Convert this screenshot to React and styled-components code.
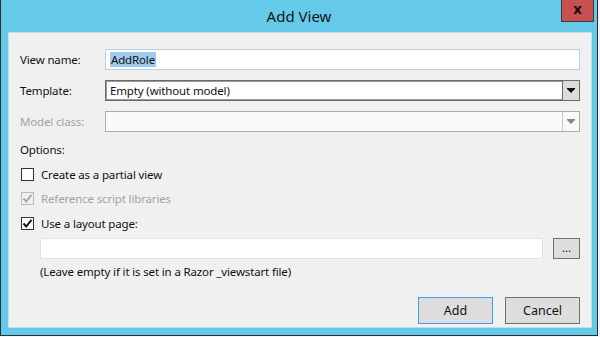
import React from 'react';
import styled, {createGlobalStyle} from 'styled-components';

const GlobalStyle = createGlobalStyle`
    html, body {
        margin: 0;
        padding: 0;
        background: #f4f4f4;
    }
    body {
        font-family: "Noto Sans", "Open Sans", sans-serif;
        font-size: 11.5px;
        letter-spacing: -0.15px;
        color: #111;
    }
`;

const App = () => {
    return (
        <>
            <GlobalStyle/>
            <Window>
                <TitleBar>
                    <span/>
                    <Title>Add View</Title>
                    <CloseCell>
                        <CloseButton>x</CloseButton>
                    </CloseCell>
                </TitleBar>

                <Client>
                    <FormGrid>
                        <Label>View name:</Label>
                        <TextBox>
                            <Selected>AddRole</Selected>
                        </TextBox>

                        <Label>Template:</Label>
                        <ComboBox>
                            <ComboText>Empty (without model)</ComboText>
                            <DropButton><Arrow/></DropButton>
                        </ComboBox>

                        <Label disabled>Model class:</Label>
                        <ComboBox disabled>
                            <ComboText/>
                            <DropButton disabled><Arrow disabled/></DropButton>
                        </ComboBox>
                    </FormGrid>

                    <SectionLabel>Options:</SectionLabel>

                    <CheckList>
                        <CheckRow>
                            <CheckBox/>
                            <span>Create as a partial view</span>
                        </CheckRow>
                        <CheckRow disabled>
                            <CheckBox disabled><CheckMark disabled/></CheckBox>
                            <span>Reference script libraries</span>
                        </CheckRow>
                        <CheckRow>
                            <CheckBox><CheckMark/></CheckBox>
                            <span>Use a layout page:</span>
                        </CheckRow>
                    </CheckList>

                    <LayoutRow>
                        <LayoutInput/>
                        <BrowseButton>...</BrowseButton>
                    </LayoutRow>
                    <Hint>(Leave empty if it is set in a Razor _viewstart file)</Hint>

                    <Footer>
                        <DialogButton primary>Add</DialogButton>
                        <DialogButton>Cancel</DialogButton>
                    </Footer>
                </Client>
            </Window>
        </>
    );
};

const CheckMark = ({disabled}) => (
    <svg width="11" height="11" viewBox="0 0 11 11">
        <path d="M1.5 5.5 L4.2 8.5 L9.5 1.8" fill="none"
              stroke={disabled ? '#a8a8a8' : '#111'} strokeWidth="1.9"/>
    </svg>
);

// window frame
const Window = styled.div`
    width: 596px;
    height: 335px;
    background: #65c9ea;
    border-left: 1px solid #2e2e2e;
    border-right: 1px solid #2e2e2e;
    border-bottom: 1px solid #2e2e2e;
    display: flex;
    flex-direction: column;
`;

const TitleBar = styled.div`
    height: 32px;
    display: grid;
    grid-template-columns: 1fr auto 1fr;
    align-items: start;
`;

const Title = styled.div`
    font-size: 15px;
    letter-spacing: 0;
    line-height: 20px;
    padding-top: 6px;
    color: #151515;
`;

const CloseCell = styled.div`
    display: flex;
    justify-content: flex-end;
    padding-right: 3px;
`;

const CloseButton = styled.div`
    width: 31px;
    height: 18px;
    background: #c75050;
    border: 1px solid #3c3c3c;
    border-top: none;
    display: flex;
    align-items: center;
    justify-content: center;
    font-family: "DejaVu Sans", sans-serif;
    font-weight: bold;
    font-size: 14px;
    letter-spacing: 0;
    line-height: 1;
    color: #111;
    padding-bottom: 3px;
    box-sizing: content-box;
`;

const Client = styled.div`
    flex: 1;
    margin: 0 5px 7px 7px;
    background: #f0f0f0;
    box-shadow: inset 0 0 0 1px #c5dce6;
    padding: 17px 12px 0 12px;
    display: flex;
    flex-direction: column;
`;

// form
const FormGrid = styled.div`
    display: grid;
    grid-template-columns: 85px 1fr;
    row-gap: 10px;
    align-items: center;
`;

const Label = styled.div`
    color: ${p => p.disabled ? '#a3a3a3' : '#111'};
`;

const TextBox = styled.div`
    height: 19px;
    background: #fff;
    border: 1px solid #b9cfe2;
    display: flex;
    align-items: center;
    padding-left: 4px;
`;

const Selected = styled.span`
    background: #9fcbef;
    line-height: 15px;
    padding: 0 1px;
`;

const ComboBox = styled.div`
    height: 19px;
    display: flex;
    background: ${p => p.disabled ? '#f9f9f9' : '#fff'};
    border: 1px solid ${p => p.disabled ? '#adadad' : '#6a6a6a'};
    box-shadow: ${p => p.disabled ? 'none' : 'inset 0 0 0 1px #9a9a9a'};
`;

const ComboText = styled.div`
    flex: 1;
    display: flex;
    align-items: center;
    padding-left: 4px;
`;

const DropButton = styled.div`
    width: 16px;
    background: ${p => p.disabled ? '#f9f9f9' : '#dcdcdc'};
    border-left: 1px solid ${p => p.disabled ? '#c6c6c6' : '#6a6a6a'};
    display: flex;
    align-items: center;
    justify-content: center;
`;

const Arrow = styled.div`
    width: 0;
    height: 0;
    border-left: 4px solid transparent;
    border-right: 4px solid transparent;
    border-top: 4px solid ${p => p.disabled ? '#8a8a8a' : '#111'};
    box-shadow: 0 -1px 0 ${p => p.disabled ? '#8a8a8a' : '#111'};
    margin-top: 1px;
`;

const SectionLabel = styled.div`
    margin-top: 10px;
    line-height: 16px;
`;

// checkboxes
const CheckList = styled.div`
    margin-top: 4px;
    display: flex;
    flex-direction: column;
`;

const CheckRow = styled.div`
    height: 24.5px;
    display: flex;
    align-items: center;
    gap: 7px;
    padding-left: 1px;
    color: ${p => p.disabled ? '#a3a3a3' : '#111'};
`;

const CheckBox = styled.div`
    width: 11px;
    height: 11px;
    border: 1px solid ${p => p.disabled ? '#bcbcbc' : '#333'};
    background: ${p => p.disabled ? '#f0f0f0' : '#fff'};
    display: flex;
    align-items: center;
    justify-content: center;
`;

const LayoutRow = styled.div`
    display: flex;
    gap: 10px;
    margin: 2px 0 0 20px;
`;

const LayoutInput = styled.div`
    flex: 1;
    height: 19px;
    background: #fff;
    border: 1px solid #e2e2e2;
`;

const BrowseButton = styled.div`
    width: 25px;
    background: #dddddd;
    border: 1px solid #707070;
    display: flex;
    align-items: center;
    justify-content: center;
    padding-bottom: 2px;
    box-sizing: content-box;
    height: 17px;
`;

const Hint = styled.div`
    margin: 5px 0 0 20px;
    line-height: 16px;
`;

const Footer = styled.div`
    margin-top: 17px;
    display: flex;
    justify-content: flex-end;
    gap: 12px;
`;

const DialogButton = styled.div`
    width: 73px;
    height: 25px;
    background: #dddddd;
    border: 1px solid ${p => p.primary ? '#3c9df8' : '#707070'};
    display: flex;
    align-items: center;
    justify-content: center;
    font-size: 12.5px;
    letter-spacing: 0;
`;

export default App;
